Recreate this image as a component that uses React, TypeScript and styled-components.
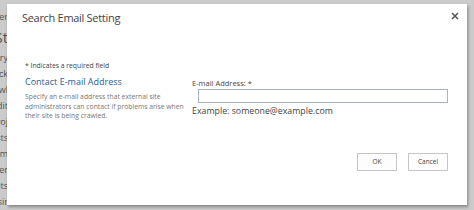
import styled, { createGlobalStyle } from "styled-components"

const GlobalStyle = createGlobalStyle`
    html, body {
        margin: 0;
        padding: 0;
        background: #cbcbcb;
    }
    * {
        box-sizing: border-box;
    }
`

const backdropWords = ["Manager", "St", "Registry", "Back", "Crawl", "Edit", "Proj", "Lists", "Form", "User", "Results", "Visir"]

export default function App(){
    return(
        <Page>
            <GlobalStyle/>
            <Backdrop>
                {backdropWords.map((w,i)=>(
                    <BackWord key={i} $big={w==="St"}>{w}</BackWord>
                ))}
            </Backdrop>
            <Dialog>
                <Header>
                    <Title>Search Email Setting</Title>
                    <CloseButton aria-label="Close">
                        <svg width="8" height="8" viewBox="0 0 8 8">
                            <path d="M1 1 L7 7 M7 1 L1 7" stroke="#555" strokeWidth="1.5" fill="none"/>
                        </svg>
                    </CloseButton>
                </Header>
                <Body>
                    <Required>* Indicates a required field</Required>
                    <Section>
                        <Describe>
                            <SectionTitle>Contact E-mail Address</SectionTitle>
                            <Desc>
                                Specify an e-mail address that external site administrators can contact if problems arise when their site is being crawled.
                            </Desc>
                        </Describe>
                        <Field>
                            <Label>E-mail Address: *</Label>
                            <Input type="text" defaultValue="" autoFocus/>
                            <Hint>Example: someone@example.com</Hint>
                        </Field>
                    </Section>
                    <Buttons>
                        <Button>OK</Button>
                        <Button>Cancel</Button>
                    </Buttons>
                </Body>
            </Dialog>
        </Page>
    )
}

const Page = styled.div`
    position: relative;
    width: 474px;
    height: 210px;
    overflow: hidden;
    background: #cbcbcb;
    font-family: "Open Sans", "Noto Sans", sans-serif;
`

const Backdrop = styled.div`
    display: flex;
    flex-direction: column;
    align-items: flex-end;
    width: 60px;
    margin-left: -52px;
    padding-top: 10px;
    gap: 3px;
`

const BackWord = styled.span<{ $big?: boolean }>`
    font-size: ${p=>p.$big ? "15px" : "9px"};
    line-height: ${p=>p.$big ? "22px" : "13px"};
    color: #555;
`

const Dialog = styled.div`
    position: absolute;
    left: 7px;
    top: 4px;
    width: 460px;
    height: 201px;
    background: #fff;
    box-shadow: 1px 2px 3px rgba(0,0,0,0.35);
    display: flex;
    flex-direction: column;
`

const Header = styled.div`
    display: flex;
    justify-content: space-between;
    align-items: flex-start;
    padding: 4px 7px 0 15px;
`

const Title = styled.h1`
    margin: 0;
    font-size: 11px;
    font-weight: 400;
    letter-spacing: -0.3px;
    color: #444;
    line-height: 20px;
`

const CloseButton = styled.button`
    border: none;
    background: none;
    padding: 0;
    margin-top: 3px;
    width: 10px;
    height: 10px;
    display: flex;
    align-items: center;
    justify-content: center;
`

const Body = styled.div`
    flex: 1;
    display: flex;
    flex-direction: column;
    padding: 33px 19px 0 18px;
`

const Required = styled.p`
    margin: 0;
    font-size: 6.8px;
    line-height: 10px;
    color: #444;
`

const Section = styled.div`
    display: flex;
    margin-top: 4px;
`

const Describe = styled.div`
    width: 171px;
`

const SectionTitle = styled.h2`
    margin: 0;
    font-size: 9px;
    font-weight: 400;
    line-height: 14px;
    color: #26609a;
`

const Desc = styled.p`
    margin: 3px 0 0;
    font-size: 6.8px;
    line-height: 9.5px;
    color: #777;
    padding-right: 8px;
`

const Field = styled.div`
    flex: 1;
    display: flex;
    flex-direction: column;
`

const Label = styled.label`
    font-size: 7.5px;
    line-height: 10px;
    margin-top: 3px;
    color: #444;
`

const Input = styled.input`
    margin: 1px 0 0 6px;
    width: 250px;
    height: 14px;
    border: 1px solid #a9b4bd;
    padding: 0 2px;
    font-size: 8px;
    outline: none;
    background: #fff;
    caret-color: #222;
`

const Hint = styled.span`
    font-size: 8.8px;
    line-height: 10px;
    margin-top: 3px;
    color: #444;
`

const Buttons = styled.div`
    display: flex;
    justify-content: flex-end;
    gap: 11px;
    margin-top: 32px;
`

const Button = styled.button`
    width: 40px;
    height: 18px;
    padding: 0;
    border: 1px solid #c6c6c6;
    background: #fdfdfd;
    font-family: "Open Sans", "Noto Sans", sans-serif;
    font-size: 6.5px;
    color: #444;
`
